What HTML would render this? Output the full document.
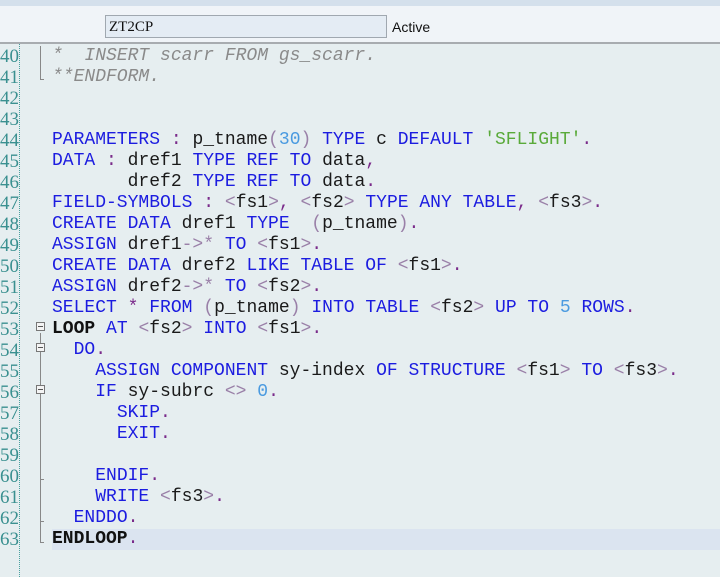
<!DOCTYPE html>
<html><head><meta charset="utf-8"><style>
html,body{margin:0;width:720px;height:577px;overflow:hidden}
body{background:#e6eef0;position:relative;font-family:"Liberation Sans",sans-serif}
#top{position:absolute;left:0;top:0;width:720px;height:6px;background:#d4e0ec}
#bar{position:absolute;left:0;top:6px;width:720px;height:36px;background:#f0f4f8;border-bottom:2px solid #a8acb0}
#inp{position:absolute;left:105px;top:15px;width:282px;height:23px;background:#e4ecf4;border:1px solid #a0a8b0;font:15px "Liberation Serif",serif;line-height:22px;padding-left:3px;box-sizing:border-box;color:#111}
#act{position:absolute;left:392px;top:19px;font-size:14px;color:#111}
#gut{position:absolute;left:19px;top:44px;width:0;height:533px;border-left:1px dotted #4aa0a0}
#code{margin:0;position:absolute;left:0;top:46px;width:720px;font:18px/21px "Liberation Mono",monospace;color:#1a1a1a}
.l{position:relative;height:21px;white-space:pre}
.n{position:absolute;left:-3px;width:22px;text-align:right;color:#3a9090;font-family:"Liberation Serif",serif;font-size:19px}
.c{position:absolute;left:52px;top:0}
.k{color:#1c1ce0}.p{color:#7a2a8a}.o{color:#9a80a8}.d{color:#4a9ae0}.s{color:#5aaa3a}.m{color:#8a8a8a;font-style:italic}.b{font-weight:bold;color:#111}
.hl{background:#dbe4f0}
.fb{position:absolute;left:36px;width:9px;height:9px;border:1px solid #777;box-sizing:border-box;background:#f4f4f4}
.fb:after{content:"";position:absolute;left:1px;top:3px;width:5px;height:1px;background:#555}
.vl{position:absolute;left:40px;border-left:1px solid #888}
.tk{position:absolute;left:40px;width:4px;border-top:1px solid #888}
</style></head><body>
<div id="top"></div><div id="bar"></div>
<div id="inp">ZT2CP</div><div id="act">Active</div>
<div id="gut"></div>
<div class="vl" style="top:46px;height:34px"></div><div class="tk" style="top:79px"></div>
<div class="vl" style="top:333px;height:210px"></div><div class="tk" style="top:542px"></div>
<div class="tk" style="top:479px"></div><div class="tk" style="top:521px"></div>
<div class="fb" style="top:322px"></div><div class="fb" style="top:343px"></div><div class="fb" style="top:385px"></div>
<div id="code"><div class="l"><span class="n">40</span><span class="c m">*  INSERT scarr FROM gs_scarr.</span></div><div class="l"><span class="n">41</span><span class="c m">**ENDFORM.</span></div><div class="l"><span class="n">42</span></div><div class="l"><span class="n">43</span></div><div class="l"><span class="n">44</span><span class="c"><span class="k">PARAMETERS</span> <span class="p">:</span> p_tname<span class="o">(</span><span class="d">30</span><span class="o">)</span> <span class="k">TYPE</span> c <span class="k">DEFAULT</span> <span class="s">'SFLIGHT'</span><span class="p">.</span></span></div><div class="l"><span class="n">45</span><span class="c"><span class="k">DATA</span> <span class="p">:</span> dref1 <span class="k">TYPE REF TO</span> data<span class="p">,</span></span></div><div class="l"><span class="n">46</span><span class="c">       dref2 <span class="k">TYPE REF TO</span> data<span class="p">.</span></span></div><div class="l"><span class="n">47</span><span class="c"><span class="k">FIELD-SYMBOLS</span> <span class="p">:</span> <span class="o">&lt;</span>fs1<span class="o">&gt;</span><span class="p">,</span> <span class="o">&lt;</span>fs2<span class="o">&gt;</span> <span class="k">TYPE ANY TABLE</span><span class="p">,</span> <span class="o">&lt;</span>fs3<span class="o">&gt;</span><span class="p">.</span></span></div><div class="l"><span class="n">48</span><span class="c"><span class="k">CREATE DATA</span> dref1 <span class="k">TYPE</span>  <span class="o">(</span>p_tname<span class="o">)</span><span class="p">.</span></span></div><div class="l"><span class="n">49</span><span class="c"><span class="k">ASSIGN</span> dref1<span class="o">-&gt;*</span> <span class="k">TO</span> <span class="o">&lt;</span>fs1<span class="o">&gt;</span><span class="p">.</span></span></div><div class="l"><span class="n">50</span><span class="c"><span class="k">CREATE DATA</span> dref2 <span class="k">LIKE TABLE OF</span> <span class="o">&lt;</span>fs1<span class="o">&gt;</span><span class="p">.</span></span></div><div class="l"><span class="n">51</span><span class="c"><span class="k">ASSIGN</span> dref2<span class="o">-&gt;*</span> <span class="k">TO</span> <span class="o">&lt;</span>fs2<span class="o">&gt;</span><span class="p">.</span></span></div><div class="l"><span class="n">52</span><span class="c"><span class="k">SELECT</span> <span class="p">*</span> <span class="k">FROM</span> <span class="o">(</span>p_tname<span class="o">)</span> <span class="k">INTO TABLE</span> <span class="o">&lt;</span>fs2<span class="o">&gt;</span> <span class="k">UP TO</span> <span class="d">5</span> <span class="k">ROWS</span><span class="p">.</span></span></div><div class="l"><span class="n">53</span><span class="c"><span class="b">LOOP</span> <span class="k">AT</span> <span class="o">&lt;</span>fs2<span class="o">&gt;</span> <span class="k">INTO</span> <span class="o">&lt;</span>fs1<span class="o">&gt;</span><span class="p">.</span></span></div><div class="l"><span class="n">54</span><span class="c">  <span class="k">DO</span><span class="p">.</span></span></div><div class="l"><span class="n">55</span><span class="c">    <span class="k">ASSIGN COMPONENT</span> sy-index <span class="k">OF STRUCTURE</span> <span class="o">&lt;</span>fs1<span class="o">&gt;</span> <span class="k">TO</span> <span class="o">&lt;</span>fs3<span class="o">&gt;</span><span class="p">.</span></span></div><div class="l"><span class="n">56</span><span class="c">    <span class="k">IF</span> sy-subrc <span class="o">&lt;&gt;</span> <span class="d">0</span><span class="p">.</span></span></div><div class="l"><span class="n">57</span><span class="c">      <span class="k">SKIP</span><span class="p">.</span></span></div><div class="l"><span class="n">58</span><span class="c">      <span class="k">EXIT</span><span class="p">.</span></span></div><div class="l"><span class="n">59</span></div><div class="l"><span class="n">60</span><span class="c">    <span class="k">ENDIF</span><span class="p">.</span></span></div><div class="l"><span class="n">61</span><span class="c">    <span class="k">WRITE</span> <span class="o">&lt;</span>fs3<span class="o">&gt;</span><span class="p">.</span></span></div><div class="l"><span class="n">62</span><span class="c">  <span class="k">ENDDO</span><span class="p">.</span></span></div><div class="l"><span class="n">63</span><span class="c hl" style="width:668px"><span class="b">ENDLOOP</span><span class="p">.</span></span></div></div>
</body></html>
